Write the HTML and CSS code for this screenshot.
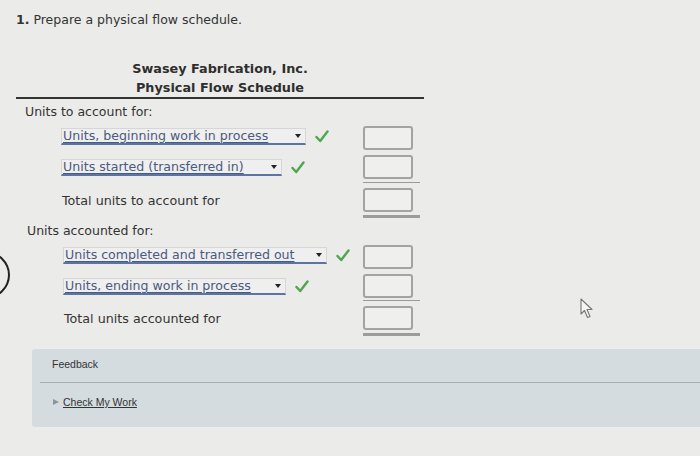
FILE: index.html
```html
<!DOCTYPE html>
<html>
<head>
<meta charset="utf-8">
<link rel="stylesheet" href="styles.css">
</head>
<body>
<div class="page">
  <p class="question"><b>1.</b> Prepare a physical flow schedule.</p>

  <div class="schedule">
    <div class="head">
      <div>Swasey Fabrication, Inc.</div>
      <div>Physical Flow Schedule</div>
    </div>

    <div class="section-label">Units to account for:</div>

    <div class="row r1">
      <div class="lhs">
        <span class="dd w1"><span class="dd-text">Units, beginning work in process</span><span class="dd-arrow"></span></span>
        <svg class="check" viewBox="0 0 14 13" width="14" height="13"><path d="M1.5 7 L5.2 11 L12.5 1.5" fill="none" stroke="#4fa64f" stroke-width="2.4" stroke-linecap="round" stroke-linejoin="round"/></svg>
      </div>
      <div class="amt"><span class="box"></span></div>
    </div>

    <div class="row r2">
      <div class="lhs">
        <span class="dd w2"><span class="dd-text">Units started (transferred in)</span><span class="dd-arrow"></span></span>
        <svg class="check" viewBox="0 0 14 13" width="14" height="13"><path d="M1.5 7 L5.2 11 L12.5 1.5" fill="none" stroke="#4fa64f" stroke-width="2.4" stroke-linecap="round" stroke-linejoin="round"/></svg>
      </div>
      <div class="amt sub"><span class="box"></span></div>
    </div>

    <div class="row r3">
      <div class="lhs"><span class="total">Total units to account for</span></div>
      <div class="amt grand"><span class="box"></span></div>
    </div>

    <div class="section-label second">Units accounted for:</div>

    <div class="row r4">
      <div class="lhs">
        <span class="dd w3"><span class="dd-text">Units completed and transferred out</span><span class="dd-arrow"></span></span>
        <svg class="check" viewBox="0 0 14 13" width="14" height="13"><path d="M1.5 7 L5.2 11 L12.5 1.5" fill="none" stroke="#4fa64f" stroke-width="2.4" stroke-linecap="round" stroke-linejoin="round"/></svg>
      </div>
      <div class="amt"><span class="box"></span></div>
    </div>

    <div class="row r5">
      <div class="lhs">
        <span class="dd w4"><span class="dd-text">Units, ending work in process</span><span class="dd-arrow"></span></span>
        <svg class="check" viewBox="0 0 14 13" width="14" height="13"><path d="M1.5 7 L5.2 11 L12.5 1.5" fill="none" stroke="#4fa64f" stroke-width="2.4" stroke-linecap="round" stroke-linejoin="round"/></svg>
      </div>
      <div class="amt sub"><span class="box"></span></div>
    </div>

    <div class="row r6">
      <div class="lhs"><span class="total">Total units accounted for</span></div>
      <div class="amt grand"><span class="box"></span></div>
    </div>
  </div>

  <div class="feedback">
    <div class="fb-title">Feedback</div>
    <div class="fb-body"><span class="fb-tri"></span><span class="fb-link">Check My Work</span></div>
  </div>

  <div class="edge-circle"></div>
  <svg class="cursor" viewBox="0 0 14 21" width="14" height="21"><path d="M1 1 L1 16 L4.5 12.5 L7.5 19.5 L10 18.5 L7 11.5 L12 11.5 Z" fill="#f4f4f4" stroke="#777" stroke-width="1.1" stroke-linejoin="round"/></svg>
</div>
</body>
</html>
```

FILE: styles.css
```css
html, body {
  margin: 0;
  padding: 0;
  background: #ebebe9;
}
body {
  font-family: "DejaVu Sans", Verdana, sans-serif;
  color: #333;
  width: 700px;
  height: 456px;
  overflow: hidden;
}
.page {
  position: relative;
  height: 456px;
  padding: 12px 0 0 16px;
  box-sizing: border-box;
}
.question {
  margin: 0;
  font-size: 12.5px;
  line-height: 16px;
  color: #333;
}
.schedule {
  width: 408px;
  margin-top: 31px;
}
.head {
  text-align: center;
  font-weight: bold;
  font-size: 12.8px;
  line-height: 19px;
  border-bottom: 2px solid #333;
  padding-bottom: 0;
  color: #2e2e2e;
}
.section-label {
  font-size: 12.5px;
  line-height: 16px;
  padding-left: 9px;
  margin-top: 5px;
}
.section-label.second {
  margin-top: 5px;
  padding-left: 11px;
}
.row {
  display: flex;
  align-items: center;
}
.lhs {
  width: 347px;
  display: flex;
  align-items: center;
  padding-left: 45px;
  box-sizing: border-box;
}
.r4 .lhs, .r5 .lhs, .r6 .lhs { padding-left: 47px; }
.amt {
  width: 57px;
  padding: 3px 0 2px;
}
.r1 .amt, .r4 .amt { padding-top: 6px; }
.amt.sub {
  padding-bottom: 3px;
  border-bottom: 1px solid #9a9a9a;
}
.r5 .amt.sub { padding-bottom: 2px; }
.amt.grand {
  padding-top: 5px;
  padding-bottom: 3px;
  border-bottom: 3px solid #9c9c9c;
}
.box {
  display: block;
  width: 50px;
  height: 24px;
  box-sizing: border-box;
  border: 2px solid #a3a3a3;
  border-radius: 3px;
  background: #efefed;
}
.dd {
  display: flex;
  align-items: center;
  height: 17px;
  box-sizing: border-box;
  background: #efefef;
  border: 1px solid #d6d6d6;
  border-bottom: 2px solid #5b74a3;
  font-size: 12.6px;
  line-height: 14px;
  color: #4a5b7e;
}
.dd-text {
  flex: 1;
  text-decoration: underline;
  text-decoration-color: #4a5b7e;
  text-underline-offset: 2px;
  white-space: nowrap;
  padding-left: 1px;
}
.dd-arrow {
  width: 0;
  height: 0;
  border-left: 3.5px solid transparent;
  border-right: 3.5px solid transparent;
  border-top: 4px solid #222;
  margin-right: 4px;
}
.w1 { width: 245px; }
.w2 { width: 221px; }
.w3 { width: 264px; }
.w4 { width: 223px; }
.check {
  margin-left: 9px;
  flex: none;
}
.total {
  font-size: 12.7px;
  line-height: 16px;
  padding-left: 1px;
}
.feedback {
  margin-top: 13px;
  margin-left: 16px;
  height: 78px;
  background: #d4dcdf;
  border-radius: 3px 0 0 3px;
  padding: 0 0 0 8px;
  box-sizing: border-box;
}
.fb-title {
  font-family: "Liberation Sans", Arial, sans-serif;
  font-size: 10.5px;
  line-height: 14px;
  padding: 8px 0 11px 12px;
  border-bottom: 1px solid #a7b1b5;
  color: #333;
}
.fb-body {
  display: flex;
  align-items: center;
  padding: 12px 0 0 13px;
  font-family: "Liberation Sans", Arial, sans-serif;
  font-size: 10.5px;
  line-height: 14px;
}
.fb-tri {
  width: 0;
  height: 0;
  border-top: 3.5px solid transparent;
  border-bottom: 3.5px solid transparent;
  border-left: 6px solid #8d9598;
  margin-right: 4px;
}
.fb-link {
  text-decoration: underline;
  color: #333;
}
.edge-circle {
  position: absolute;
  left: -40px;
  top: 251px;
  width: 46px;
  height: 44px;
  border: 2px solid #222;
  border-radius: 50%;
}
.cursor {
  position: absolute;
  left: 580px;
  top: 298px;
}
```
